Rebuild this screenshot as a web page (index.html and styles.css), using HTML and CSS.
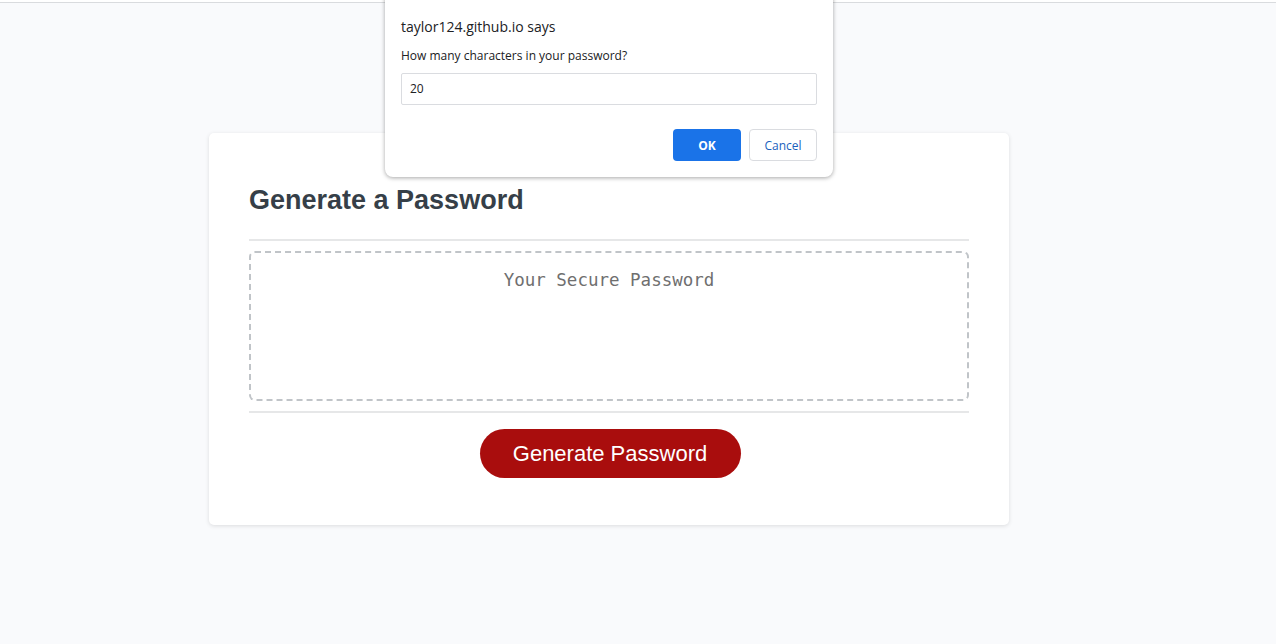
FILE: index.html
```html
<!DOCTYPE html>
<html lang="en">
<head>
<meta charset="UTF-8">
<title>Password Generator</title>
<link rel="stylesheet" href="styles.css">
</head>
<body>
<div class="topline"></div>
<div class="wrapper">
  <div class="card">
    <div class="card-header">
      <h2>Generate a Password</h2>
    </div>
    <div class="card-body">
      <textarea readonly placeholder="Your Secure Password" aria-label="Generated Password"></textarea>
    </div>
    <div class="card-footer">
      <button class="btn">Generate Password</button>
    </div>
  </div>
  <div class="dialog">
    <div class="dialog-title">taylor124.github.io says</div>
    <div class="dialog-msg">How many characters in your password?</div>
    <div class="dialog-input">20</div>
    <div class="dialog-actions">
      <button class="d-btn d-ok">OK</button>
      <button class="d-btn d-cancel">Cancel</button>
    </div>
  </div>
</div>
</body>
</html>
```
FILE: styles.css
```css
* { box-sizing: border-box; }
html, body { margin: 0; padding: 0; }
body {
  background: #f9fafc;
  font-family: "Liberation Sans", Arial, sans-serif;
  height: 644px;
  overflow: hidden;
}
.topline {
  height: 3px;
  background: #ffffff;
  border-bottom: 1px solid #d9dbde;
}
.wrapper {
  position: relative;
  width: 1218px;
  padding-top: 130px;
}
.card {
  width: 800px;
  margin: 0 auto;
  background: #ffffff;
  border-radius: 5px;
  box-shadow: 0 1px 4px rgba(0, 0, 0, 0.12);
  padding: 0 40px 47px;
}
.card-header {
  padding-top: 51px;
  padding-bottom: 23px;
  border-bottom: 2px solid #e6e7e8;
}
.card-header h2 {
  margin: 0;
  font-size: 27px;
  line-height: 32px;
  font-weight: 700;
  color: #363f48;
}
.card-body {
  padding: 10px 0;
}
textarea {
  display: block;
  width: 100%;
  height: 150px;
  border: 2px dashed #c0c4c8;
  border-radius: 6px;
  resize: none;
  background: #ffffff;
  padding: 17px 16px;
  font-family: "DejaVu Sans Mono", monospace;
  font-size: 17.5px;
  text-align: center;
  outline: none;
}
textarea::placeholder { color: #6f6f6f; }
.card-footer {
  border-top: 2px solid #e6e7e8;
  padding-top: 16px;
  padding-left: 2px;
  display: flex;
  justify-content: center;
}
.btn {
  background: #a90d0d;
  color: #ffffff;
  border: none;
  border-radius: 25px;
  height: 49px;
  width: 261px;
  font-family: "Liberation Sans", Arial, sans-serif;
  font-size: 22px;
  padding: 0;
}
.dialog {
  position: absolute;
  top: -15px;
  left: 385px;
  width: 448px;
  background: #ffffff;
  border-radius: 0 0 8px 8px;
  box-shadow: 0 1px 4px rgba(0, 0, 0, 0.35);
  padding: 28px 16px 16px;
  font-family: "Open Sans", "Noto Sans", sans-serif;
  color: #202124;
}
.dialog-title {
  font-size: 14px;
  line-height: 22px;
}
.dialog-msg {
  font-size: 12px;
  line-height: 18px;
  margin-top: 9px;
}
.dialog-input {
  margin-top: 8px;
  height: 32px;
  border: 1px solid #dadce0;
  border-radius: 2px;
  font-size: 12px;
  line-height: 30px;
  padding: 0 8px;
}
.dialog-actions {
  margin-top: 24px;
  display: flex;
  justify-content: flex-end;
  gap: 8px;
}
.d-btn {
  height: 32px;
  width: 68px;
  border-radius: 4px;
  font-family: "Open Sans", "Noto Sans", sans-serif;
  font-size: 12px;
  padding: 0;
}
.d-ok {
  background: #1a73e8;
  color: #ffffff;
  border: none;
  font-weight: 700;
}
.d-cancel {
  background: #ffffff;
  color: #1a5fbd;
  border: 1px solid #dadce0;
}
```
